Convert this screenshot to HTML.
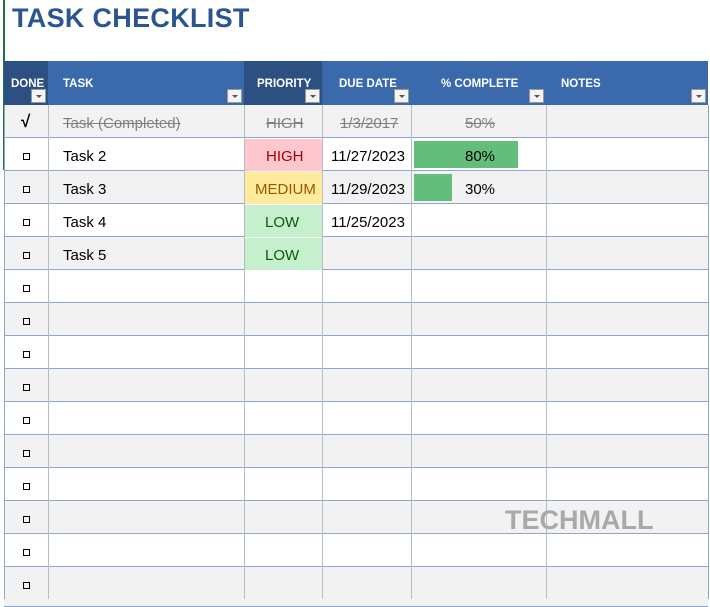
<!DOCTYPE html>
<html><head><meta charset="utf-8"><style>
*{margin:0;padding:0;box-sizing:border-box}
body{width:710px;height:599px;overflow:hidden;background:#fff;font-family:"Liberation Sans",Arial,sans-serif;position:relative}
.title{position:absolute;left:12px;top:3px;font-size:27px;font-weight:bold;color:#2b5591;letter-spacing:0.3px}
.green{position:absolute;left:3px;top:0;width:2px;height:170px;background:#217346}
.hdr{position:absolute;top:61px;height:44px;background:#3a69ac;color:#fff;font-size:11.5px;font-weight:bold}
.hdr span{position:absolute;top:17px}
.dd{position:absolute;bottom:2px;right:2px;width:15px;height:14px;background:#f4f4f4;border:1px solid #999}
.dd:after{content:"";position:absolute;left:4px;top:5px;border-left:3px solid transparent;border-right:3px solid transparent;border-top:3px solid #555}
.row{position:absolute;left:4px;width:704px;height:33px;border-bottom:1px solid #8ea6c8}
.vl{position:absolute;top:105px;height:494px;width:1px;background:#b4bccb}
.c{position:absolute;font-size:15px;color:#000;top:10px}
.done{position:absolute;left:23px;width:7px;height:7px;border:1px solid #000;top:15px}
</style></head><body>
<div class="green"></div>
<div class="title">TASK CHECKLIST</div>
<div class="hdr" style="left:4px;width:44px;background:#2c5081"><span style="left:7px">DONE</span><div class="dd"></div></div>
<div class="hdr" style="left:48px;width:196px"><span style="left:15px">TASK</span><div class="dd"></div></div>
<div class="hdr" style="left:244px;width:78px;background:#2c5081"><span style="left:13px">PRIORITY</span><div class="dd"></div></div>
<div class="hdr" style="left:322px;width:89px"><span style="left:17px">DUE DATE</span><div class="dd"></div></div>
<div class="hdr" style="left:411px;width:135px"><span style="left:30px">% COMPLETE</span><div class="dd"></div></div>
<div class="hdr" style="left:546px;width:162px"><span style="left:15px">NOTES</span><div class="dd"></div></div>

<div class="row" style="top:105px;background:#f2f2f2"></div>
<div class="row" style="top:138px;background:#fff"></div>
<div class="row" style="top:171px;background:#f2f2f2"></div>
<div class="row" style="top:204px;background:#fff"></div>
<div class="row" style="top:237px;background:#f2f2f2"></div>
<div class="row" style="top:270px;background:#fff"></div>
<div class="row" style="top:303px;background:#f2f2f2"></div>
<div class="row" style="top:336px;background:#fff"></div>
<div class="row" style="top:369px;background:#f2f2f2"></div>
<div class="row" style="top:402px;background:#fff"></div>
<div class="row" style="top:435px;background:#f2f2f2"></div>
<div class="row" style="top:468px;background:#fff"></div>
<div class="row" style="top:501px;background:#f2f2f2"></div>
<div class="row" style="top:534px;background:#fff"></div>
<div class="row" style="top:567px;background:#f2f2f2;height:40px"></div>

<div style="position:absolute;left:245px;top:139px;width:77px;height:32px;background:#ffc7ce"></div>
<div style="position:absolute;left:245px;top:172px;width:77px;height:32px;background:#ffeb9c"></div>
<div style="position:absolute;left:245px;top:205px;width:77px;height:32px;background:#c6efce"></div>
<div style="position:absolute;left:245px;top:238px;width:77px;height:32px;background:#c6efce"></div>
<div style="position:absolute;left:414px;top:141px;width:104px;height:27px;background:#63be7b"></div>
<div style="position:absolute;left:414px;top:174px;width:38px;height:27px;background:#63be7b"></div>

<div class="vl" style="left:4px;background:#8ea6c8"></div>
<div class="vl" style="left:48px"></div>
<div class="vl" style="left:244px"></div>
<div class="vl" style="left:322px"></div>
<div class="vl" style="left:411px"></div>
<div class="vl" style="left:546px"></div>
<div class="vl" style="left:708px;background:#8ea6c8"></div>

<div style="position:absolute;left:0;top:105px;width:710px">
 <div class="c" style="left:21px;font-weight:bold;top:7px;font-size:17px">√</div>
 <div class="c" style="left:63px;color:#808080;text-decoration:line-through">Task (Completed)</div>
 <div class="c" style="left:266px;color:#808080;text-decoration:line-through">HIGH</div>
 <div class="c" style="left:340px;color:#808080;text-decoration:line-through">1/3/2017</div>
 <div class="c" style="left:465px;color:#808080;text-decoration:line-through">50%</div>
</div>
<div style="position:absolute;left:0;top:138px;width:710px">
 <div class="done"></div><div class="c" style="left:63px">Task 2</div>
 <div class="c" style="left:266px;color:#9c0006">HIGH</div>
 <div class="c" style="left:331px">11/27/2023</div>
 <div class="c" style="left:465px">80%</div>
</div>
<div style="position:absolute;left:0;top:171px;width:710px">
 <div class="done"></div><div class="c" style="left:63px">Task 3</div>
 <div class="c" style="left:255px;color:#9c5700">MEDIUM</div>
 <div class="c" style="left:331px">11/29/2023</div>
 <div class="c" style="left:465px">30%</div>
</div>
<div style="position:absolute;left:0;top:204px;width:710px">
 <div class="done"></div><div class="c" style="left:63px">Task 4</div>
 <div class="c" style="left:265px;color:#006100">LOW</div>
 <div class="c" style="left:331px">11/25/2023</div>
</div>
<div style="position:absolute;left:0;top:237px;width:710px">
 <div class="done"></div><div class="c" style="left:63px">Task 5</div>
 <div class="c" style="left:265px;color:#006100">LOW</div>
</div>
<div class="done" style="top:285px"></div>
<div class="done" style="top:318px"></div>
<div class="done" style="top:351px"></div>
<div class="done" style="top:384px"></div>
<div class="done" style="top:417px"></div>
<div class="done" style="top:450px"></div>
<div class="done" style="top:483px"></div>
<div class="done" style="top:516px"></div>
<div class="done" style="top:549px"></div>
<div class="done" style="top:582px"></div>
<div style="position:absolute;left:505px;top:505px;font-size:27px;font-weight:bold;color:#a9a9a9">TECHMALL</div>
</body></html>
